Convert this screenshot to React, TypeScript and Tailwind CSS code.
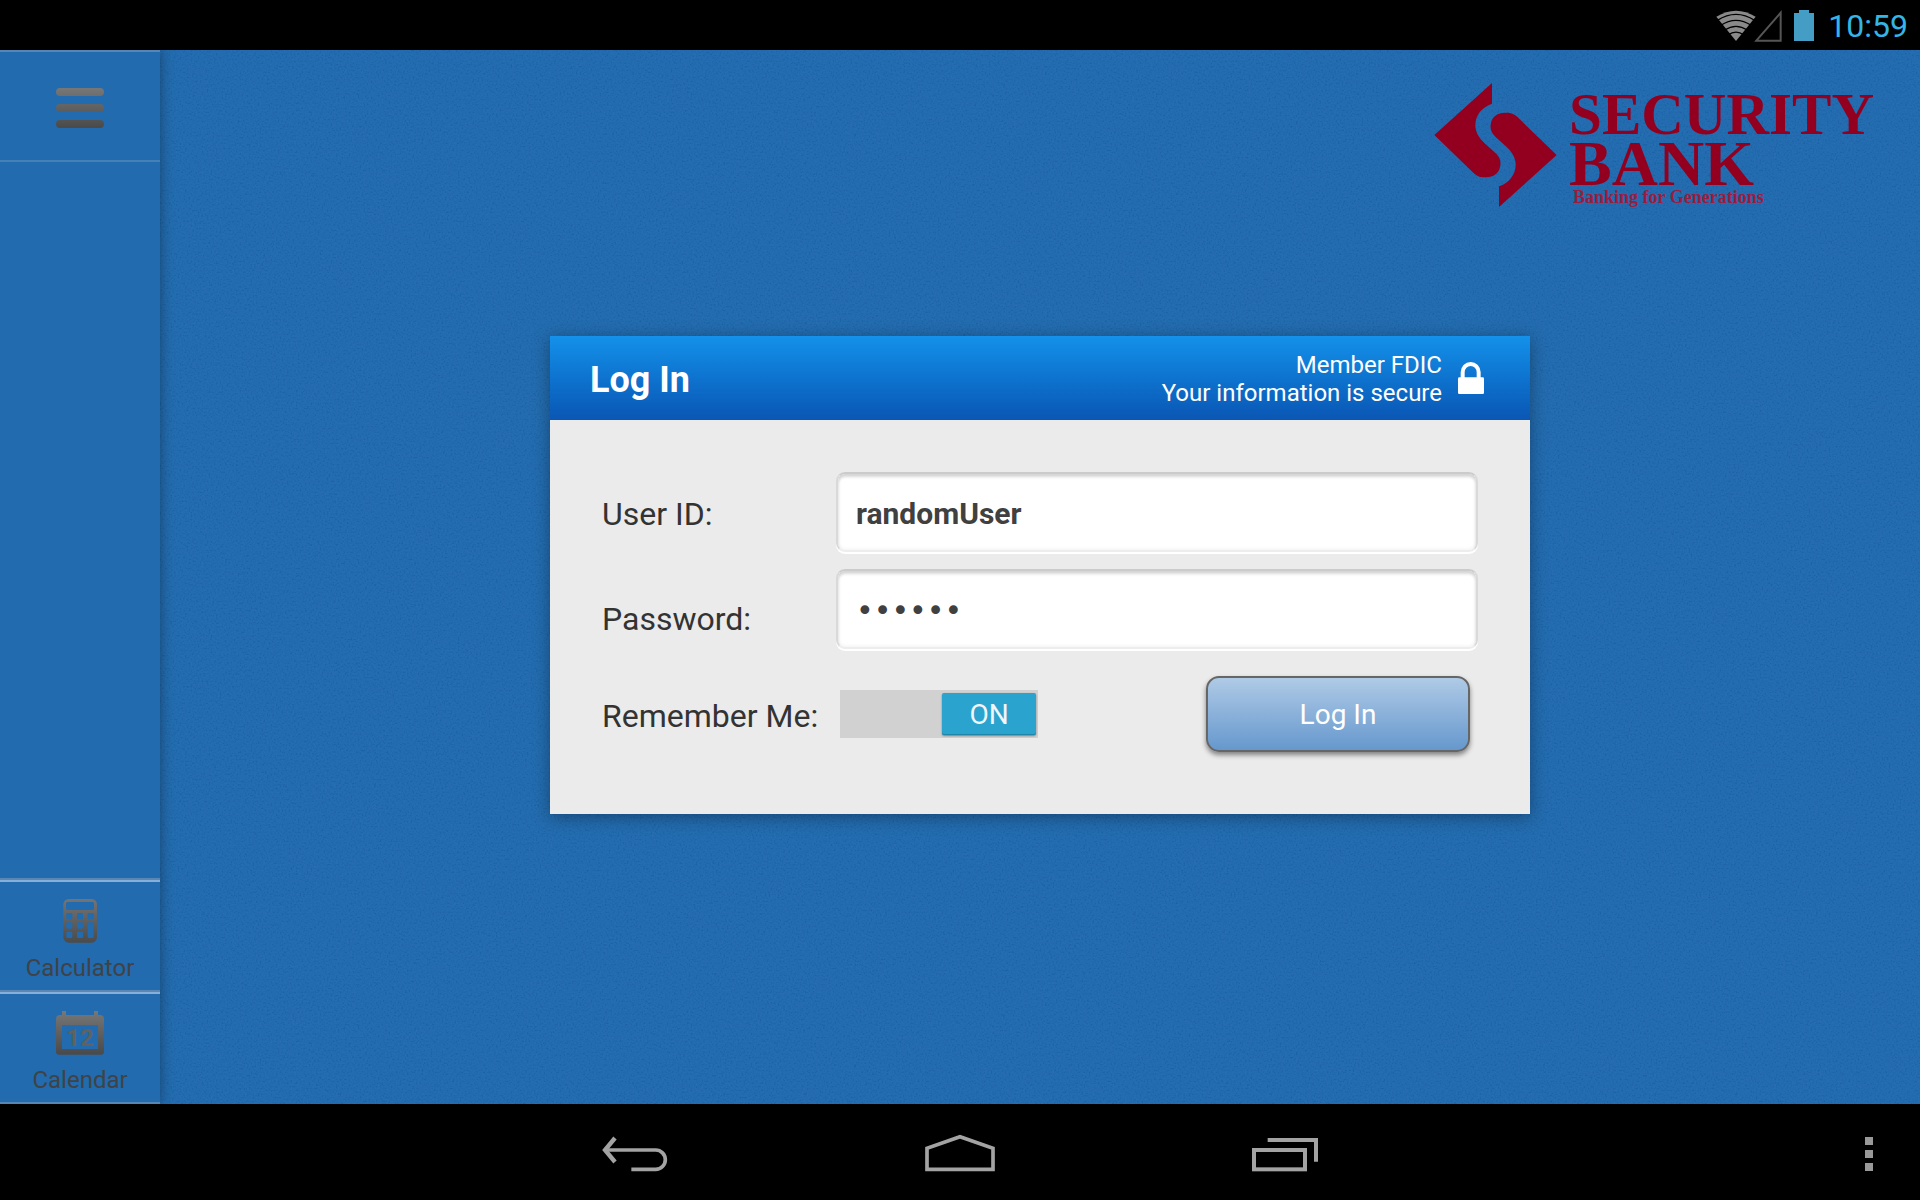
import { useState } from "react";

function WifiIcon() {
    return (
        <svg className="w-10 h-8" viewBox="0 0 120 96">
            <path d="M1 20 Q60 -16 119 20 L60 93 Z" fill="#8a8a8a"/>
            <g fill="none" stroke="#000" strokeWidth="4">
                <path d="M4 31 Q60 -5 116 31"/>
                <path d="M14 46 Q60 16 106 46"/>
                <path d="M26 60 Q60 38 94 60"/>
                <path d="M36 75 Q60 58 84 75"/>
            </g>
        </svg>
    );
}

function SignalIcon() {
    return (
        <svg className="w-7 h-8" viewBox="0 0 84 96">
            <path d="M7 92 L80 8 L80 92 Z" fill="none" stroke="#555" strokeWidth="6"/>
        </svg>
    );
}

function BatteryIcon() {
    return (
        <svg className="w-5 h-8" viewBox="0 0 20 32">
            <path d="M0 3H5V0H15V3H20V31H0Z" fill="#449dc5"/>
        </svg>
    );
}

function MenuIcon() {
    return (
        <svg className="w-12 h-10" viewBox="0 0 48 40">
            <defs>
                <linearGradient id="menuGray" gradientUnits="userSpaceOnUse" x1="0" y1="0" x2="0" y2="40">
                    <stop offset="0" stopColor="#777"/>
                    <stop offset="1" stopColor="#4a4a4a"/>
                </linearGradient>
            </defs>
            <g fill="url(#menuGray)">
                <rect width="48" height="8" rx="4"/>
                <rect y="16" width="48" height="8" rx="4"/>
                <rect y="32" width="48" height="8" rx="4"/>
            </g>
        </svg>
    );
}

function CalculatorIcon() {
    return (
        <svg className="w-12 h-11" viewBox="0 0 144 132">
            <defs>
                <linearGradient id="calcGray" x1="0" y1="0" x2="0" y2="1">
                    <stop offset="0" stopColor="#747474"/>
                    <stop offset="1" stopColor="#4b4b4b"/>
                </linearGradient>
            </defs>
            <rect x="22" width="101" height="131" rx="16" fill="url(#calcGray)"/>
            <g fill="#216bae">
                <rect x="30" y="9" width="84" height="24" rx="5"/>
                <rect x="31" y="42" width="18" height="19" rx="4"/>
                <rect x="63" y="42" width="18" height="19" rx="4"/>
                <rect x="95" y="42" width="18" height="19" rx="4"/>
                <rect x="31" y="70" width="18" height="19" rx="4"/>
                <rect x="63" y="70" width="18" height="19" rx="4"/>
                <rect x="31" y="98" width="18" height="19" rx="4"/>
                <rect x="63" y="98" width="18" height="19" rx="4"/>
                <rect x="95" y="70" width="18" height="47" rx="4"/>
            </g>
        </svg>
    );
}

function CalendarIcon() {
    return (
        <svg className="w-12 h-11" viewBox="0 0 144 132">
            <defs>
                <linearGradient id="calGray" gradientUnits="userSpaceOnUse" x1="0" y1="0" x2="0" y2="132">
                    <stop offset="0" stopColor="#777"/>
                    <stop offset="1" stopColor="#494949"/>
                </linearGradient>
            </defs>
            <path d="M18 0H30V12H114V0H126V12H132Q144 12 144 24V122Q144 131 134 131H10Q0 131 0 122V24Q0 12 12 12H18ZM18 43V114H126V43Z" fill="url(#calGray)" fillRule="evenodd"/>
            <text x="72" y="104" textAnchor="middle" fontFamily="Roboto, sans-serif" fontSize="72" fontWeight="700" fill="#616161">12</text>
        </svg>
    );
}

function LockIcon() {
    return (
        <svg className="w-[26px] h-8" viewBox="0 0 78 96">
            <path d="M14 50V31a24 25 0 0 1 48 0V50" fill="none" stroke="#fff" strokeWidth="12"/>
            <rect y="46" width="78" height="50" rx="4" fill="#fff"/>
        </svg>
    );
}

function BankMark() {
    const half = "M218 68V130C188 140 168 165 168 195C168 216 180 234 195 248L229 279C240 290 245 300 243 315C240 340 222 351 200 351H190C180 350 172 346 165 340L45 224Z";
    return (
        <svg className="w-[123px] h-[124px]" viewBox="44 68 369 372" fill="#93001f">
            <path d={half}/>
            <path d={half} transform="rotate(180 228.5 254)"/>
        </svg>
    );
}

function BackIcon() {
    return (
        <svg className="w-[66px] h-10" viewBox="0 0 198 120" fill="none" stroke="#a3a3a3" strokeWidth="11">
            <path d="M12 48H161a29 29 0 0 1 0 58H88"/>
            <path d="M39 12L9 48L39 84" strokeWidth="13"/>
        </svg>
    );
}

function HomeIcon() {
    return (
        <svg className="w-[70px] h-10" viewBox="0 0 210 120" fill="none" stroke="#a3a3a3" strokeWidth="11">
            <path d="M6 106V43L105 8L204 43V106Z"/>
        </svg>
    );
}

function RecentIcon() {
    return (
        <svg className="w-[66px] h-10" viewBox="0 0 198 120" fill="none" stroke="#a3a3a3" strokeWidth="12">
            <rect x="6" y="48" width="153" height="58"/>
            <path d="M47 18H192V83"/>
        </svg>
    );
}

function Texture() {
    return (
        <svg className="absolute inset-0 w-full h-full opacity-4" aria-hidden="true">
            <filter id="grain">
                <feTurbulence type="fractalNoise" baseFrequency="0.55" numOctaves="2" seed="4"/>
                <feColorMatrix type="saturate" values="0"/>
                <feComponentTransfer>
                    <feFuncR type="linear" slope="2.4" intercept="-0.8"/>
                    <feFuncG type="linear" slope="2.4" intercept="-0.8"/>
                    <feFuncB type="linear" slope="2.4" intercept="-0.8"/>
                    <feFuncA type="linear" slope="0" intercept="1"/>
                </feComponentTransfer>
            </filter>
            <rect width="100%" height="100%" filter="url(#grain)"/>
        </svg>
    );
}

function StatusBar() {
    return (
        <header className="flex h-[50px] items-center justify-end bg-black pr-3 pt-0.5">
            <WifiIcon/>
            <div className="-ml-0.5"><SignalIcon/></div>
            <div className="ml-3"><BatteryIcon/></div>
            <time className="ml-3.5 text-[32px] leading-10 text-[#33b5e5]">10:59</time>
        </header>
    );
}

function Sidebar() {
    return (
        <nav className="relative z-10 flex w-40 shrink-0 flex-col border-y-2 border-[#5586b5] bg-[#216bae] shadow-[0_0_12px_rgba(0,0,0,0.4)]">
            <button aria-label="Menu" className="flex h-[110px] items-center justify-center border-b-2 border-[#4681b5] pt-1">
                <MenuIcon/>
            </button>
            <div className="flex-1"/>
            <SidebarLink label="Calculator"><CalculatorIcon/></SidebarLink>
            <SidebarLink label="Calendar"><CalendarIcon/></SidebarLink>
        </nav>
    );
}

function SidebarLink(props: { label: string, children: React.ReactNode }) {
    return (
        <div className="border-t-2 border-[#5c87b4]">
            <a href="#" className="flex h-[110px] flex-col items-center gap-2 border-t-2 border-[#87afd9] pt-[17px] text-2xl leading-[34px] text-[#3f4347]">
                {props.children}
                {props.label}
            </a>
        </div>
    );
}

const fieldClass = "h-20 min-w-0 flex-1 rounded-[9px] border-2 border-t-[#cbcbcb] border-x-[#d9d9d9] border-b-[#ededed] bg-white px-[18px] pt-0.5 text-[30px] text-[#404040] shadow-[inset_0_3px_3px_rgba(0,0,0,0.14),inset_0_0_4px_rgba(0,0,0,0.08),0_2px_0_#fff] outline-none";

function LoginCard() {
    const [userId, setUserId] = useState("randomUser");
    const [password, setPassword] = useState("secret");
    const [remember, setRemember] = useState(true);

    return (
        <section className="w-[980px] max-w-full bg-[#ebebeb] shadow-[0_3px_16px_rgba(0,0,0,0.35)]">
            <div className="flex h-[84px] items-center bg-linear-to-b from-[#1491ea] to-[#0b56b4] pl-10 pr-[46px] text-white">
                <h1 className="flex-1 pt-1 text-4xl font-bold">Log In</h1>
                <p className="pt-0.5 text-right text-2xl leading-7">Member FDIC<br/>Your information is secure</p>
                <div className="ml-4"><LockIcon/></div>
            </div>
            <form className="px-[52px] pb-[62px] pt-[52px] text-[32px] leading-9 text-[#333]" onSubmit={(e) => e.preventDefault()}>
                <div className="flex items-center">
                    <label htmlFor="userId" className="w-[234px] pt-1">User ID:</label>
                    <input id="userId" className={`${fieldClass} font-bold`} value={userId} onChange={(e) => setUserId(e.target.value)}/>
                </div>
                <div className="mt-[17px] flex items-end">
                    <label htmlFor="password" className="w-[234px] pb-3">Password:</label>
                    <input id="password" type="password" className={`${fieldClass} font-['DejaVu_Sans',sans-serif]`} value={password} onChange={(e) => setPassword(e.target.value)}/>
                </div>
                <div className="mt-[27px] flex items-center">
                    <label htmlFor="remember" className="w-[238px] pt-1">Remember Me:</label>
                    <div className="relative h-12 w-[198px]">
                        <input id="remember" type="checkbox" role="switch" className="block h-12 w-full appearance-none bg-[#d1d1d1]" checked={remember} onChange={(e) => setRemember(e.target.checked)}/>
                        <span className={`pointer-events-none absolute top-[3px] flex h-[42px] w-[94px] items-center justify-center rounded-xs pt-0.5 text-[28px] text-[#f0f5f8] shadow-[inset_0_-1px_0_#2185a8,0_1px_2px_rgba(0,0,0,0.4)] ${remember ? "right-[2px] bg-[#2aa3cf]" : "left-[2px] bg-[#999]"}`}>
                            {remember ? "ON" : "OFF"}
                        </span>
                    </div>
                    <button type="submit" className="ml-auto mr-2 h-[76px] w-[264px] rounded-[13px] border-2 border-[#666] bg-linear-to-b from-[#afcae6] to-[#6698cd] pt-0.5 text-[28px] text-white shadow-[0_3px_5px_rgba(0,0,0,0.45)]">
                        Log In
                    </button>
                </div>
            </form>
        </section>
    );
}

export default function App() {
    return (
        <div className="flex min-h-screen flex-col bg-black font-[Roboto,sans-serif]">
            <StatusBar/>
            <div className="flex flex-1">
                <Sidebar/>
                <main className="relative flex flex-1 flex-col bg-[#1d69af]">
                    <Texture/>
                    <div className="relative flex justify-end pr-[46px] pt-[33px] text-[#93001f]">
                        <BankMark/>
                        <div className="ml-3 font-['Liberation_Serif',serif] font-bold">
                            <div className="pt-1.5 text-[59px] leading-[50px]">SECURITY</div>
                            <div className="text-[64px] leading-[50px]">BANK</div>
                            <div className="pl-1 text-lg leading-4 text-[#9c1c40]">Banking for Generations</div>
                        </div>
                    </div>
                    <div className="relative mt-[129px] flex justify-center">
                        <LoginCard/>
                    </div>
                </main>
            </div>
            <footer className="relative flex h-24 items-center justify-center bg-black">
                <div className="flex items-center gap-[257px] pt-1">
                    <button aria-label="Back"><BackIcon/></button>
                    <button aria-label="Home"><HomeIcon/></button>
                    <button aria-label="Recent apps"><RecentIcon/></button>
                </div>
                <button aria-label="More options" className="absolute right-[47px] flex flex-col gap-[5px] pt-1">
                    <span className="size-2 bg-[#999]"/>
                    <span className="size-2 bg-[#999]"/>
                    <span className="size-2 bg-[#999]"/>
                </button>
            </footer>
        </div>
    );
}
